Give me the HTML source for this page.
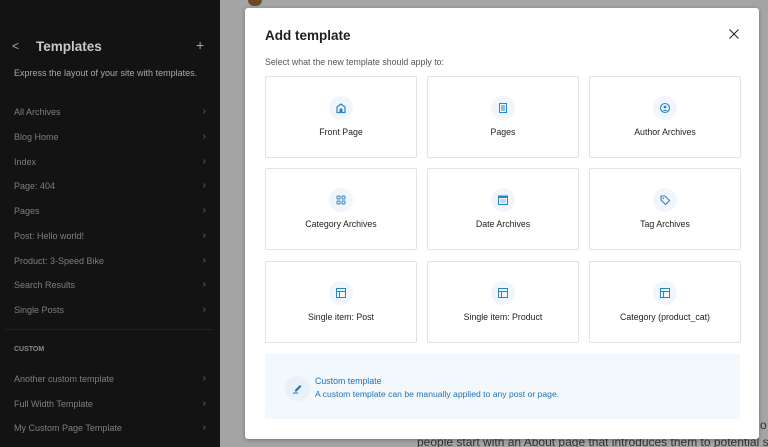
<!DOCTYPE html>
<html><head><style>
*{margin:0;padding:0;box-sizing:border-box}
html,body{width:768px;height:447px;overflow:hidden}
body{background:#a4a4a4;font-family:"Liberation Sans",sans-serif;position:relative}
.side{position:absolute;left:0;top:0;width:220px;height:447px;background:#131313;color:#8a8a8a;font-size:9px}
.side .t{position:absolute;left:36px;top:39px;color:#c8c8c8;font-size:13.5px;font-weight:bold}
.side .b{position:absolute;left:12px;top:39px;color:#aaa;font-size:12px}
.side .p{position:absolute;left:196px;top:37px;color:#aaa;font-size:14px}
.side .d{position:absolute;left:14px;top:68px;color:#a8a8a8;font-size:9px}
.it{position:absolute;left:14px;width:192px;color:#7e7e7e}
.it:after{content:"›";position:absolute;right:0;top:-1px;color:#666;font-size:10px}
.hr{position:absolute;left:5px;width:207px;top:329px;border-top:1px solid #222}
.cu{position:absolute;left:14px;top:346px;font-size:7px;font-weight:bold;color:#8a8a8a}
.bgtext{position:absolute;color:#333;font-size:12px;white-space:nowrap}
.modal{position:absolute;left:245px;top:8px;width:514px;height:431px;background:#fff;border-radius:3px;box-shadow:0 1px 4px rgba(0,0,0,.3)}
.h{position:absolute;left:20px;top:20px;font-size:13.5px;font-weight:bold;color:#1e1e1e}
.x{position:absolute;left:483px;top:20px}
.s{position:absolute;left:20px;top:49px;font-size:8.8px;color:#555}
.c{position:absolute;width:152px;height:82px;border:1px solid #e2e2e2;border-radius:2px}
.ic{position:absolute;left:63px;top:19px;width:24px;height:24px;border-radius:50%;background:#f0f6fb}
.ic svg{position:absolute;left:6px;top:6px}
.lb{position:absolute;left:0;right:0;top:50px;text-align:center;font-size:8.8px;color:#1e1e1e}
.cust{position:absolute;left:20px;top:346px;width:475px;height:65px;background:#f3f8fc}
.cust .ci{position:absolute;left:20px;top:22px;width:25px;height:25px;border-radius:50%;background:#e8f1f8}
.cust .a{position:absolute;left:50px;top:22px;font-size:8.8px;color:#2272b1}
.cust .b2{position:absolute;left:50px;top:35px;font-size:8.6px;color:#2272b1}
</style></head><body>
<div class="side">
<div class="b">&lt;</div><div class="t">Templates</div><div class="p">+</div>
<div class="d">Express the layout of your site with templates.</div>
<div class="it" style="top:107px">All Archives</div>
<div class="it" style="top:132px">Blog Home</div>
<div class="it" style="top:157px">Index</div>
<div class="it" style="top:181px">Page: 404</div>
<div class="it" style="top:206px">Pages</div>
<div class="it" style="top:231px">Post: Hello world!</div>
<div class="it" style="top:256px">Product: 3-Speed Bike</div>
<div class="it" style="top:280px">Search Results</div>
<div class="it" style="top:305px">Single Posts</div>
<div class="hr"></div>
<div class="cu">CUSTOM</div>
<div class="it" style="top:374px">Another custom template</div>
<div class="it" style="top:399px">Full Width Template</div>
<div class="it" style="top:423px">My Custom Page Template</div>
</div>
<div style="position:absolute;left:248px;top:0;width:14px;height:6px;background:#6a4a2a;border-radius:0 0 7px 7px"></div>
<div class="bgtext" style="left:750px;top:404px">st</div>
<div class="bgtext" style="left:760px;top:418px">o</div>
<div class="bgtext" style="left:417px;top:435px">people start with an About page that introduces them to potential site</div>
<div class="modal">
<div class="h">Add template</div>
<svg class="x" width="12" height="12" viewBox="0 0 12 12"><path d="M1.5 1.5L10.5 10.5M10.5 1.5L1.5 10.5" stroke="#1e1e1e" stroke-width="1"/></svg>
<div class="s">Select what the new template should apply to:</div>

<div class="c" style="left:20px;top:68px"><div class="ic"><svg width="12" height="12" viewBox="0 0 12 12"><path d="M2 5L6 2L10 5V10.5H2Z" fill="none" stroke="#2a85c6" stroke-width="1.2"/><rect x="4.5" y="6.5" width="3" height="4" fill="#2a85c6"/></svg></div><div class="lb">Front Page</div></div>
<div class="c" style="left:182px;top:68px"><div class="ic"><svg width="12" height="12" viewBox="0 0 12 12"><rect x="2.5" y="1.5" width="7" height="9" fill="none" stroke="#2a85c6"/><path d="M4 4H8M4 6H8M4 8H8" stroke="#2a85c6"/></svg></div><div class="lb">Pages</div></div>
<div class="c" style="left:344px;top:68px"><div class="ic"><svg width="12" height="12" viewBox="0 0 12 12"><circle cx="6" cy="6" r="4.5" fill="none" stroke="#2a85c6" stroke-width="1.1"/><circle cx="6" cy="5" r="1.4" fill="#2a85c6"/><path d="M3.5 9Q6 6.5 8.5 9" fill="#2a85c6"/></svg></div><div class="lb">Author Archives</div></div>

<div class="c" style="left:20px;top:160px"><div class="ic"><svg width="12" height="12" viewBox="0 0 12 12"><rect x="2" y="2" width="3" height="3" rx=".5" fill="none" stroke="#2a85c6"/><rect x="7" y="2" width="3" height="3" rx=".5" fill="none" stroke="#2a85c6"/><rect x="2" y="7" width="3" height="3" rx=".5" fill="none" stroke="#2a85c6"/><rect x="7" y="7" width="3" height="3" rx=".5" fill="none" stroke="#2a85c6"/></svg></div><div class="lb">Category Archives</div></div>
<div class="c" style="left:182px;top:160px"><div class="ic"><svg width="12" height="12" viewBox="0 0 12 12"><rect x="1.5" y="2" width="9" height="8.5" fill="none" stroke="#2a85c6"/><rect x="1.5" y="2" width="9" height="2" fill="#2a85c6"/><path d="M3.5 6h1M5.5 6h1M7.5 6h1M3.5 8h1M5.5 8h1M7.5 8h1" stroke="#2a85c6"/></svg></div><div class="lb">Date Archives</div></div>
<div class="c" style="left:344px;top:160px"><div class="ic"><svg width="12" height="12" viewBox="0 0 12 12"><path d="M2 2H6L10.5 6.5L6.5 10.5L2 6Z" fill="none" stroke="#2a85c6" stroke-width="1.1"/><circle cx="4.3" cy="4.3" r=".8" fill="#2a85c6"/></svg></div><div class="lb">Tag Archives</div></div>

<div class="c" style="left:20px;top:253px"><div class="ic"><svg width="12" height="12" viewBox="0 0 12 12"><rect x="1.5" y="1.5" width="9" height="9" fill="none" stroke="#2a85c6"/><path d="M1.5 4.5H10.5M4.5 4.5V10.5" stroke="#2a85c6"/></svg></div><div class="lb">Single item: Post</div></div>
<div class="c" style="left:182px;top:253px"><div class="ic"><svg width="12" height="12" viewBox="0 0 12 12"><rect x="1.5" y="1.5" width="9" height="9" fill="none" stroke="#2a85c6"/><path d="M1.5 4.5H10.5M4.5 4.5V10.5" stroke="#2a85c6"/></svg></div><div class="lb">Single item: Product</div></div>
<div class="c" style="left:344px;top:253px"><div class="ic"><svg width="12" height="12" viewBox="0 0 12 12"><rect x="1.5" y="1.5" width="9" height="9" fill="none" stroke="#2a85c6"/><path d="M1.5 4.5H10.5M4.5 4.5V10.5" stroke="#2a85c6"/></svg></div><div class="lb">Category (product_cat)</div></div>

<div class="cust"><div class="ci"><svg style="position:absolute;left:7px;top:6px" width="11" height="12" viewBox="0 0 11 12"><path d="M3 8L8 3L9.5 4.5L4.5 9.5H3Z" fill="#2272b1"/><path d="M1 11H6" stroke="#2272b1"/></svg></div>
<div class="a">Custom template</div><div class="b2">A custom template can be manually applied to any post or page.</div></div>
</div>
</body></html>
